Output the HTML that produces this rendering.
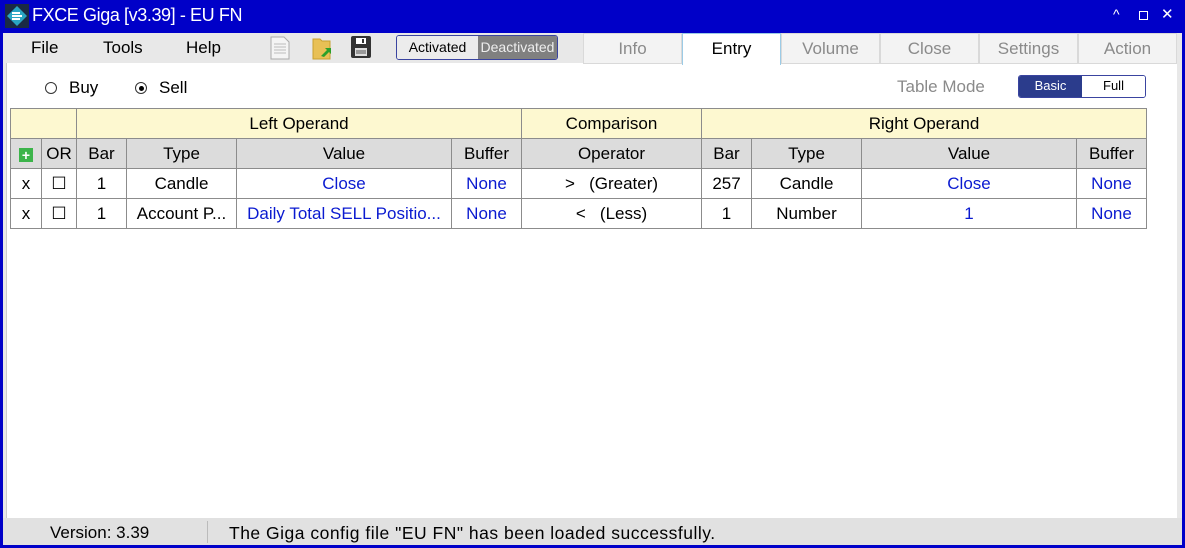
<!DOCTYPE html>
<html><head><meta charset="utf-8"><style>
*{margin:0;padding:0;box-sizing:border-box}
body{width:1185px;height:548px;overflow:hidden;background:#0000c8;font-family:"Liberation Sans",sans-serif;position:relative}
.abs{position:absolute}
.title{left:32px;top:5px;color:#fff;font-size:18px;letter-spacing:-0.4px}
.frame{left:3px;top:33px;width:1179px;height:512px;background:#e8e8e8}
.menu{top:38px;font-size:17px;color:#000}
.content{left:6px;top:63px;width:1171px;height:455px;background:#fff;border-left:1px solid #ccc}
.tab{top:33px;height:31px;width:99px;border:1px solid #d9d9d9;background:#f3f3f3;color:#8a8a8a;font-size:17px;text-align:center;line-height:30px}
.status{left:3px;top:518px;width:1179px;height:27px;background:#e1e1e1;font-size:17px;color:#111}
table{position:absolute;left:10px;top:108px;border-collapse:collapse;font-size:17px;table-layout:fixed}
td{border:1px solid #8c8c8c;text-align:center;height:30px;padding:1px 0 0 0;white-space:nowrap;overflow:hidden}
.h1 td{background:#fdf8d0}
.h2 td{background:#dcdcdc}
.b{color:#0a1ad0}
</style></head><body>
<svg class="abs" style="left:5px;top:4px" width="24" height="24" viewBox="0 0 24 24"><rect width="24" height="24" fill="#1a2a44"/><path d="M12 2 L22 12 L12 22 L2 12Z" fill="#2aa5c4"/><path d="M7 9h8M7 12h10M7 15h8" stroke="#fff" stroke-width="2"/></svg>
<div class="abs title">FXCE Giga [v3.39] - EU FN</div>
<div class="abs" style="left:1113px;top:6px;color:#fff;font-size:14px">^</div>
<div class="abs" style="left:1139px;top:11px;width:9px;height:9px;border:1.5px solid #fff"></div>
<div class="abs" style="left:1161px;top:5px;color:#fff;font-size:15px">✕</div>
<div class="abs frame"></div>
<div class="abs menu" style="left:31px">File</div>
<div class="abs menu" style="left:103px">Tools</div>
<div class="abs menu" style="left:186px">Help</div>
<svg class="abs" style="left:270px;top:36px" width="20" height="24"><path d="M1 1h13l5 5v17H1z" fill="#f4f4f4" stroke="#aaa"/><path d="M4 8h12M4 11h12M4 14h12M4 17h12" stroke="#bbb"/></svg>
<svg class="abs" style="left:312px;top:36px" width="20" height="24"><path d="M1 3h7l2 2h8v18H1z" fill="#e8c055" stroke="#c9a030"/><path d="M9 20l6-6-2-2h6v6l-2-2-5 5z" fill="#2aa02a"/></svg>
<svg class="abs" style="left:351px;top:36px" width="20" height="22"><rect x="0" y="0" width="20" height="22" rx="2" fill="#333"/><rect x="5" y="2" width="10" height="6" fill="#fff"/><rect x="11" y="3" width="2" height="4" fill="#333"/><rect x="4" y="12" width="12" height="8" fill="#ddd"/><path d="M5 15h10M5 17h10" stroke="#555"/></svg>
<div class="abs" style="left:396px;top:35px;width:162px;height:25px;border:1.5px solid #3a44a0;border-radius:3px;overflow:hidden;font-size:14px;display:flex">
<div style="width:81px;background:#ececec;text-align:center;line-height:22px">Activated</div>
<div style="flex:1;background:#808080;color:#eee;text-align:center;line-height:22px">Deactivated</div></div>
<div class="abs content"></div>
<div class="abs tab" style="left:583px">Info</div>
<div class="abs tab" style="left:682px;background:#fff;color:#000;border-color:#9ccbe6;border-bottom:none;height:32px">Entry</div>
<div class="abs tab" style="left:781px">Volume</div>
<div class="abs tab" style="left:880px">Close</div>
<div class="abs tab" style="left:979px">Settings</div>
<div class="abs tab" style="left:1078px">Action</div>
<div class="abs" style="left:45px;top:82px;width:12px;height:12px;border:1px solid #333;border-radius:50%"></div>
<div class="abs" style="left:69px;top:78px;font-size:17px">Buy</div>
<div class="abs" style="left:135px;top:82px;width:12px;height:12px;border:1px solid #333;border-radius:50%"><div style="margin:2.5px;width:5px;height:5px;background:#000;border-radius:50%"></div></div>
<div class="abs" style="left:159px;top:78px;font-size:17px">Sell</div>
<div class="abs" style="left:897px;top:77px;font-size:17px;color:#8a8a8a">Table Mode</div>
<div class="abs" style="left:1018px;top:75px;width:128px;height:23px;border:1.5px solid #3a44a0;border-radius:3px;overflow:hidden;font-size:13px;display:flex">
<div style="width:63px;background:#2b3c8c;color:#fff;text-align:center;line-height:20px">Basic</div>
<div style="flex:1;background:#fff;text-align:center;line-height:20px">Full</div></div>
<table>
<colgroup><col style="width:31px"><col style="width:35px"><col style="width:50px"><col style="width:110px"><col style="width:215px"><col style="width:70px"><col style="width:180px"><col style="width:50px"><col style="width:110px"><col style="width:215px"><col style="width:70px"></colgroup>
<tr class="h1"><td colspan="2"></td><td colspan="4">Left Operand</td><td>Comparison</td><td colspan="4">Right Operand</td></tr>
<tr class="h2"><td><span style="display:inline-block;width:14px;height:14px;background:#3cb44a;color:#fff;font-size:14px;line-height:14px;font-weight:bold;vertical-align:middle">+</span></td><td>OR</td><td>Bar</td><td>Type</td><td>Value</td><td>Buffer</td><td>Operator</td><td>Bar</td><td>Type</td><td>Value</td><td>Buffer</td></tr>
<tr><td>x</td><td>☐</td><td>1</td><td>Candle</td><td class="b">Close</td><td class="b">None</td><td>&gt;&nbsp;&nbsp; (Greater)</td><td>257</td><td>Candle</td><td class="b">Close</td><td class="b">None</td></tr>
<tr><td>x</td><td>☐</td><td>1</td><td>Account P...</td><td class="b">Daily Total SELL Positio...</td><td class="b">None</td><td>&lt;&nbsp;&nbsp; (Less)</td><td>1</td><td>Number</td><td class="b">1</td><td class="b">None</td></tr>
</table>
<div class="abs status"></div>
<div class="abs" style="left:50px;top:523px;font-size:17px">Version: 3.39</div>
<div class="abs" style="left:207px;top:521px;width:1px;height:22px;background:#bbb"></div>
<div class="abs" style="left:229px;top:523px;font-size:17.5px;letter-spacing:0.5px">The Giga config file "EU FN" has been loaded successfully.</div>
</body></html>
